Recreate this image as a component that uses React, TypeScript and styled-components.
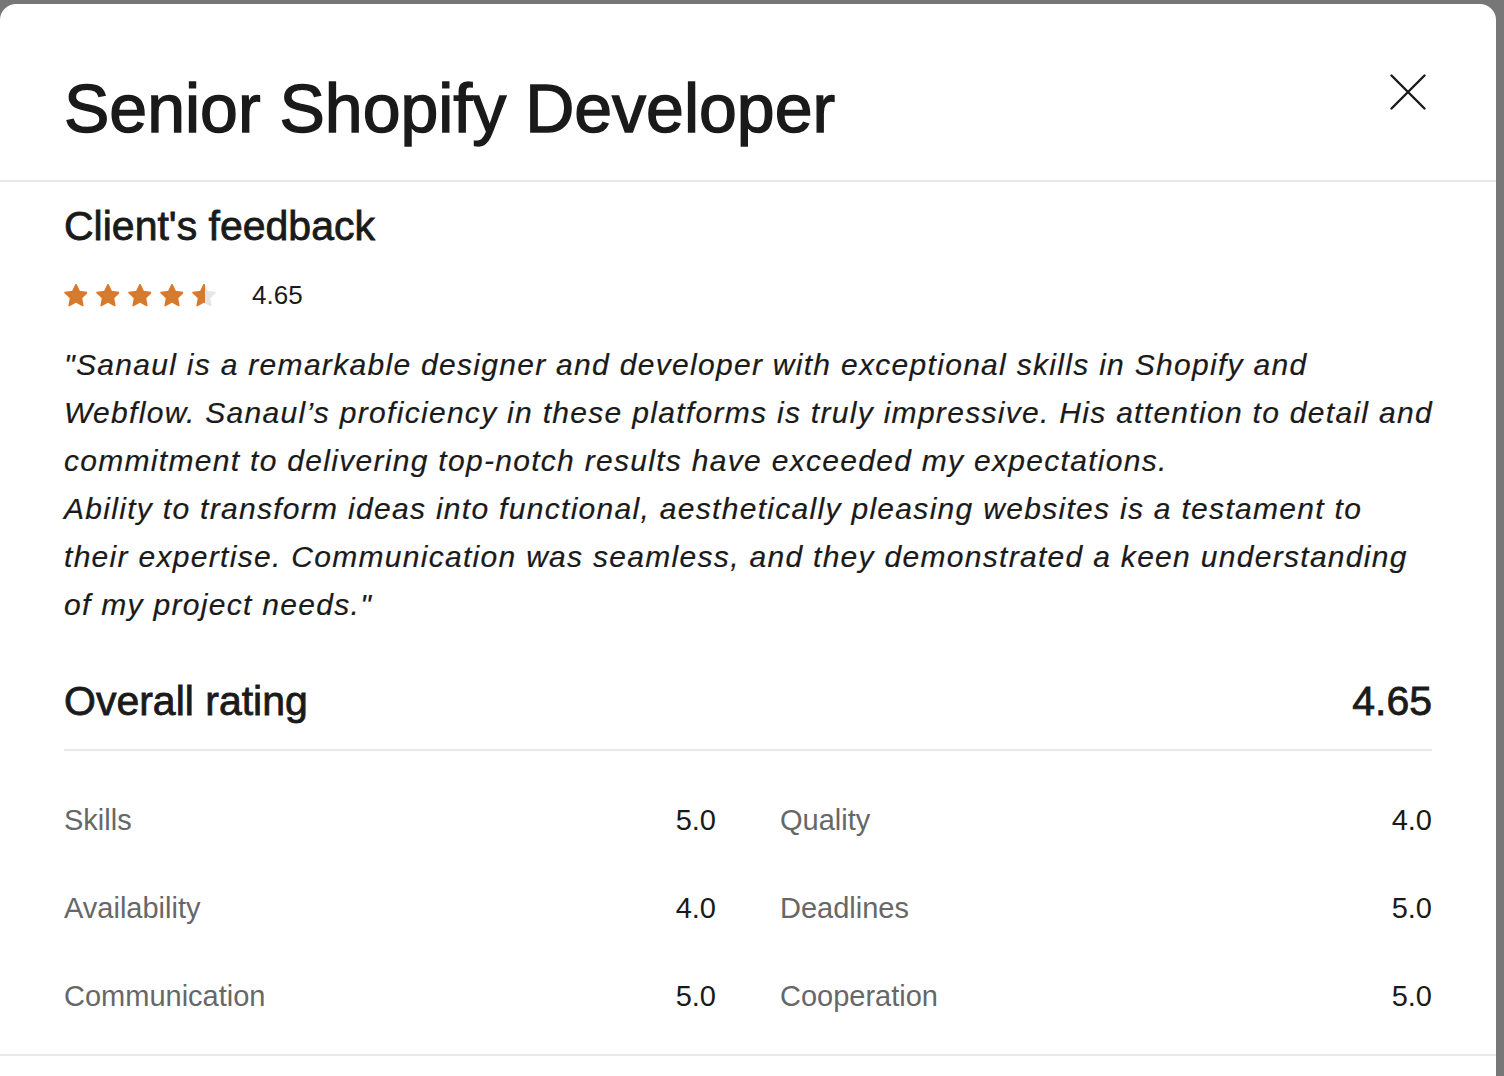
import React from 'react';
import styled, { createGlobalStyle } from 'styled-components';

const GlobalStyle = createGlobalStyle`
  html, body {
    margin: 0;
    padding: 0;
    background: #777777;
    font-family: "Liberation Sans", Arial, sans-serif;
    color: #1a1a1a;
  }
  * {
    box-sizing: border-box;
  }
`;

const Backdrop = styled.div`
  min-height: 1076px;
  padding-top: 4px;
  overflow: hidden;
`;

const Modal = styled.div`
  width: 1496px;
  min-height: 1072px;
  background: #ffffff;
  border-radius: 16px 16px 0 0;
`;

const Header = styled.header`
  display: flex;
  justify-content: space-between;
  align-items: flex-start;
  padding: 64px 64px 30px;
  border-bottom: 2px solid #e9e9e9;
`;

const Title = styled.h1`
  margin: 0;
  font-size: 68px;
  line-height: 1.2;
  font-weight: 400;
  -webkit-text-stroke: 1.4px #1a1a1a;
  color: #1a1a1a;
`;

const CloseButton = styled.button`
  width: 48px;
  height: 48px;
  padding: 0;
  border: none;
  background: transparent;
  display: flex;
  align-items: center;
  justify-content: center;
  cursor: pointer;
`;

const Body = styled.div`
  padding: 20px 64px 0;
`;

const SectionTitle = styled.h2`
  margin: 0;
  font-size: 41px;
  line-height: 48px;
  font-weight: 400;
  -webkit-text-stroke: 0.8px #1a1a1a;
  color: #1a1a1a;
`;

const StarsRow = styled.div`
  display: flex;
  align-items: center;
  height: 32px;
  margin-top: 30px;
`;

const Stars = styled.div`
  display: flex;
  gap: 8px;
`;

const StarScore = styled.span`
  margin-left: 36px;
  font-size: 26px;
  color: #1a1a1a;
`;

const Quote = styled.p`
  margin: 29px 0 0;
  font-size: 30px;
  line-height: 48px;
  letter-spacing: 1.3px;
  font-style: italic;
  color: #1a1a1a;
  -webkit-text-stroke: 0.2px #1a1a1a;
`;

const QuoteLine = styled.span`
  display: block;
  white-space: nowrap;
`;

const OverallRow = styled.div`
  display: flex;
  justify-content: space-between;
  align-items: center;
  margin-top: 48px;
  padding-bottom: 24px;
  border-bottom: 2px solid #e9e9e9;
`;

const OverallText = styled.span`
  font-size: 41px;
  line-height: 48px;
  -webkit-text-stroke: 0.8px #1a1a1a;
`;

const ScoresGrid = styled.div`
  display: grid;
  grid-template-columns: 1fr 1fr;
  column-gap: 64px;
  margin-top: 26px;
  padding-bottom: 13px;
`;

const ScoreRow = styled.div`
  display: flex;
  justify-content: space-between;
  align-items: center;
  height: 88px;
  font-size: 29px;
  line-height: 1.2;
`;

const ScoreLabel = styled.span`
  color: #676767;
`;

const ScoreValue = styled.span`
  color: #1a1a1a;
`;

const Footer = styled.div`
  border-top: 2px solid #e9e9e9;
  height: 24px;
`;

const STAR_PATH =
  'M12 2.6l2.75 5.8 6.35.8-4.65 4.4 1.2 6.3L12 16.8l-5.65 3.1 1.2-6.3L2.9 9.2l6.35-.8z';

const Star = ({ fill, id }: { fill: number; id: string }) => (
  <svg width="24" height="24" viewBox="2 2 20 20">
    <defs>
      <linearGradient id={id} x1="0" x2="1" y1="0" y2="0">
        <stop offset={fill} stopColor="#d67a2e" />
        <stop offset={fill} stopColor="#e6e6e6" />
      </linearGradient>
    </defs>
    <path
      d={STAR_PATH}
      fill={`url(#${id})`}
      stroke={`url(#${id})`}
      strokeWidth="1.4"
      strokeLinejoin="round"
    />
  </svg>
);

const scores: [string, string][] = [
  ['Skills', '5.0'],
  ['Quality', '4.0'],
  ['Availability', '4.0'],
  ['Deadlines', '5.0'],
  ['Communication', '5.0'],
  ['Cooperation', '5.0'],
];

const quoteLines = [
  '"Sanaul is a remarkable designer and developer with exceptional skills in Shopify and',
  'Webflow. Sanaul’s proficiency in these platforms is truly impressive. His attention to detail and',
  'commitment to delivering top-notch results have exceeded my expectations.',
  'Ability to transform ideas into functional, aesthetically pleasing websites is a testament to',
  'their expertise. Communication was seamless, and they demonstrated a keen understanding',
  'of my project needs."',
];

const rating = 4.65;

export default function App() {
  return (
    <>
      <GlobalStyle />
      <Backdrop>
        <Modal>
          <Header>
            <Title>Senior Shopify Developer</Title>
            <CloseButton aria-label="Close">
              <svg width="36" height="36" viewBox="0 0 36 36">
                <path
                  d="M1.5 1.5L34.5 34.5M34.5 1.5L1.5 34.5"
                  stroke="#1a1a1a"
                  strokeWidth="2.4"
                  strokeLinecap="round"
                />
              </svg>
            </CloseButton>
          </Header>
          <Body>
            <SectionTitle>Client's feedback</SectionTitle>
            <StarsRow>
              <Stars>
                {[0, 1, 2, 3, 4].map((i) => (
                  <Star
                    key={i}
                    id={`star-${i}`}
                    fill={rating - i >= 1 ? 1 : 0.55}
                  />
                ))}
              </Stars>
              <StarScore>{rating}</StarScore>
            </StarsRow>
            <Quote>
              {quoteLines.map((line) => (
                <QuoteLine key={line}>{line}</QuoteLine>
              ))}
            </Quote>
            <OverallRow>
              <OverallText>Overall rating</OverallText>
              <OverallText>{rating}</OverallText>
            </OverallRow>
            <ScoresGrid>
              {scores.map(([label, value]) => (
                <ScoreRow key={label}>
                  <ScoreLabel>{label}</ScoreLabel>
                  <ScoreValue>{value}</ScoreValue>
                </ScoreRow>
              ))}
            </ScoresGrid>
          </Body>
          <Footer />
        </Modal>
      </Backdrop>
    </>
  );
}
